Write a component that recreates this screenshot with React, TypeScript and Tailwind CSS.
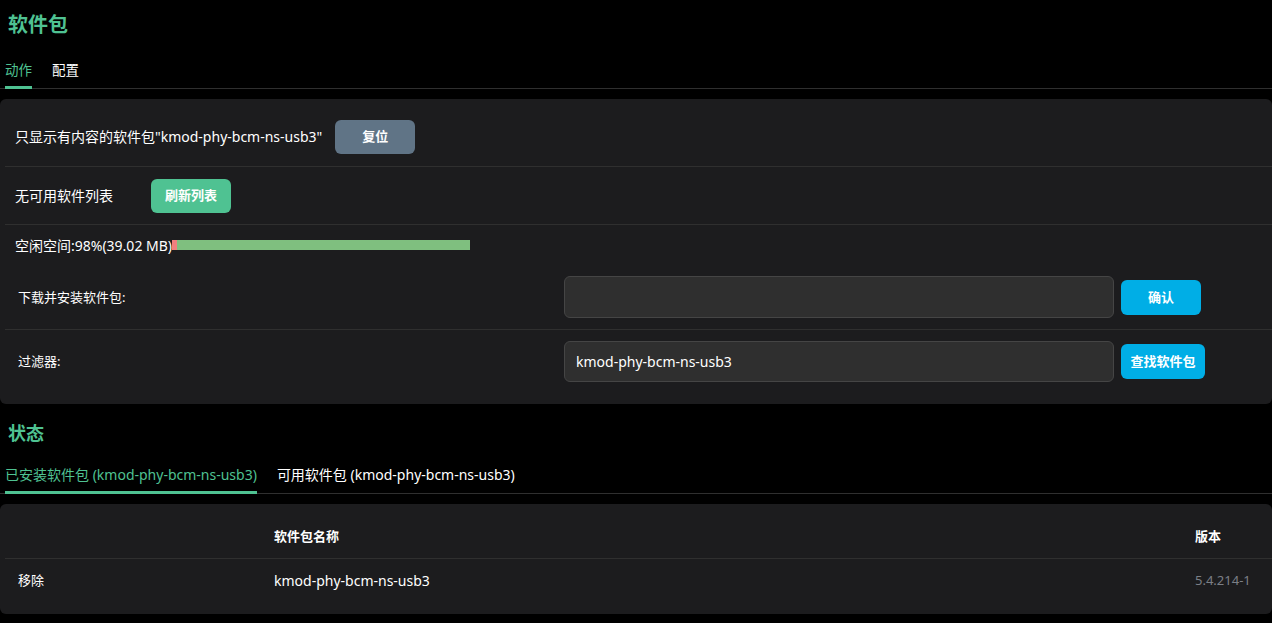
import type { FC, ReactNode } from 'react';

const font = { fontFamily: '"Noto Sans", "Noto Sans CJK SC", sans-serif' };

const Tabs: FC<{ items: string[]; active: number }> = ({ items, active }) => (
  <ul className="flex gap-5 border-b border-[#2f2f2f] px-[5px]">
    {items.map((t, i) => (
      <li
        key={t}
        className={
          i === active
            ? '-mb-px border-b-[3px] border-[#4fc292] pb-[5px] text-[#4fc292]'
            : 'pb-[8px] text-white'
        }
      >
        {t}
      </li>
    ))}
  </ul>
);

const Btn: FC<{ color: string; w: string; children: ReactNode }> = ({ color, w, children }) => (
  <button type="button" className={`h-[34px] rounded-md text-[13px] font-bold text-white ${color} ${w}`}>
    {children}
  </button>
);

export default function App() {
  return (
    <div className="min-h-screen bg-black text-[13px] text-white" style={font}>
      <h2 className="px-2 pt-[10px] text-[20px] font-bold leading-[30px] text-[#4fc292]">软件包</h2>
      <div className="mt-[20px] text-[13.5px]">
        <Tabs items={['动作', '配置']} active={0} />
      </div>

      <div className="mt-[10px] rounded-md bg-[#1c1c1e] pb-[11px]">
        <div className="ml-[5px] flex h-[68px] items-center gap-[13px] border-b border-[#2f2f2f] pt-[8px] pl-[10px] text-[14px]">
          <span>只显示有内容的软件包"kmod-phy-bcm-ns-usb3"</span>
          <Btn color="bg-[#607486]" w="w-[80px]">复位</Btn>
        </div>
        <div className="ml-[5px] flex h-[58px] items-center border-b border-[#2f2f2f] pl-[10px] text-[14px]">
          <span className="w-[136px]">无可用软件列表</span>
          <Btn color="bg-[#4fc292]" w="w-[80px]">刷新列表</Btn>
        </div>
        <div className="ml-[5px] flex h-[40px] items-center pl-[10px] text-[14px]">
          <span>空闲空间:98%(39.02 MB)</span>
          <div className="flex h-[10px] w-[298px]">
            <div className="w-[5px] bg-[#f07f7f]" />
            <div className="flex-1 bg-[#7fbf7f]" />
          </div>
        </div>
        <div className="ml-[5px] flex h-[65px] items-center border-b border-[#2f2f2f] pl-[13px]">
          <span className="w-[546px]">下载并安装软件包:</span>
          <div className="h-[42px] w-[550px] rounded-md border border-[#454545] bg-[#2f2f2f]" />
          <button type="button" className="ml-[7px] h-[35px] w-[80px] rounded-md bg-[#00aee6] text-[13px] font-bold text-white">
            确认
          </button>
        </div>
        <div className="ml-[5px] flex h-[63px] items-center pl-[13px]">
          <span className="w-[546px]">过滤器:</span>
          <div className="flex h-[41px] w-[550px] items-center rounded-md border border-[#454545] bg-[#2f2f2f] px-[11px] text-[14px]">
            kmod-phy-bcm-ns-usb3
          </div>
          <button type="button" className="ml-[7px] h-[35px] w-[84px] rounded-md bg-[#00aee6] text-[13px] font-bold text-white">
            查找软件包
          </button>
        </div>
      </div>

      <h3 className="mt-[16px] px-2 text-[18px] font-bold leading-[26px] text-[#4fc292]">状态</h3>
      <div className="mt-[18px] text-[14px]">
        <Tabs items={['已安装软件包 (kmod-phy-bcm-ns-usb3)', '可用软件包 (kmod-phy-bcm-ns-usb3)']} active={0} />
      </div>

      <div className="mt-[10px] rounded-md bg-[#1c1c1e] pb-[12px]">
        <div className="ml-[5px] flex h-[55px] items-center border-b border-[#2f2f2f] pt-[10px] pl-[13px] font-bold">
          <span className="w-[256px]" />
          <span className="w-[921px]">软件包名称</span>
          <span>版本</span>
        </div>
        <div className="ml-[5px] flex h-[43px] items-center pl-[13px] text-[14px]">
          <span className="w-[256px] text-[13px]">移除</span>
          <span className="w-[921px]">kmod-phy-bcm-ns-usb3</span>
          <span className="text-[13px] text-[#7b7f86]">5.4.214-1</span>
        </div>
      </div>
    </div>
  );
}
